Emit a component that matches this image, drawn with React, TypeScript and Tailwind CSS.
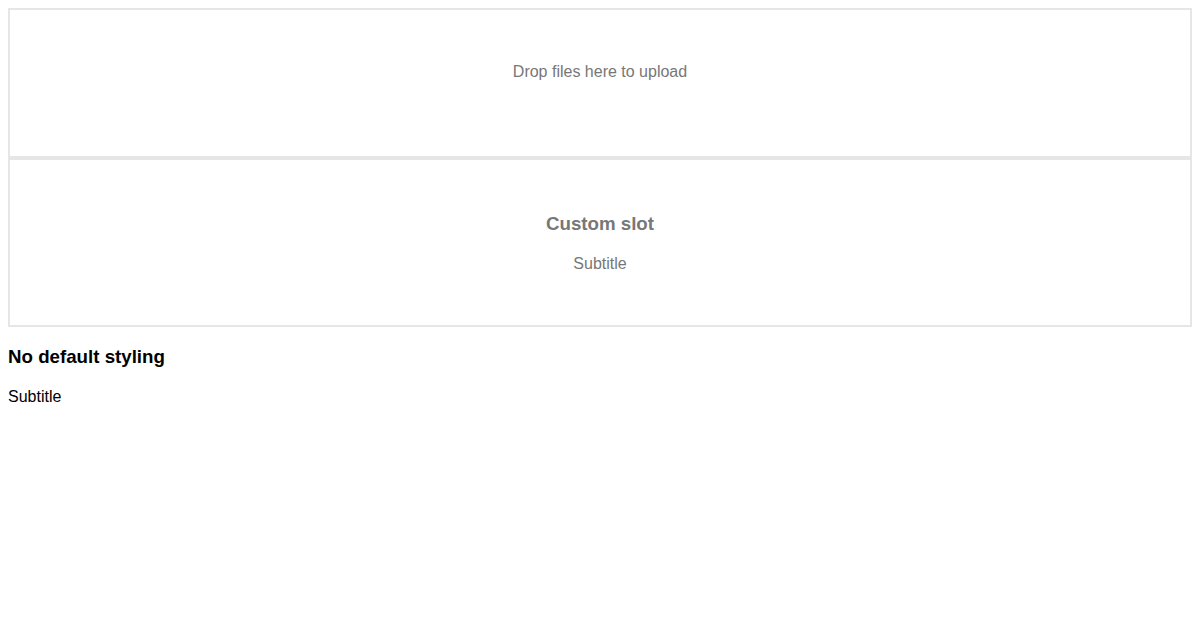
import React from 'react';

const DropZone: React.FC<{ children: React.ReactNode; className?: string }> = ({ children, className }) => (
  <div className={`box-border w-full border-2 border-[#e6e6e6] text-center text-[#777777] ${className ?? ''}`}>
    {children}
  </div>
);

const App: React.FC = () => {
  return (
    <div className="min-h-[630px] bg-white p-[8px] font-['Liberation_Sans',Arial,sans-serif] text-black">
      <DropZone className="h-[150px] pt-[53px]">
        <p className="text-[16px] leading-[18px]">Drop files here to upload</p>
      </DropZone>
      <DropZone className="h-[169px] pt-[53px]">
        <h3 className="text-[18.72px] font-bold leading-[22px]">Custom slot</h3>
        <p className="mt-[20px] text-[16px] leading-[18px]">Subtitle</p>
      </DropZone>
      <div>
        <h3 className="mt-[19px] text-[18.72px] font-bold leading-[22px]">No default styling</h3>
        <p className="mt-[20px] text-[16px] leading-[18px]">Subtitle</p>
      </div>
    </div>
  );
};

export default App;
